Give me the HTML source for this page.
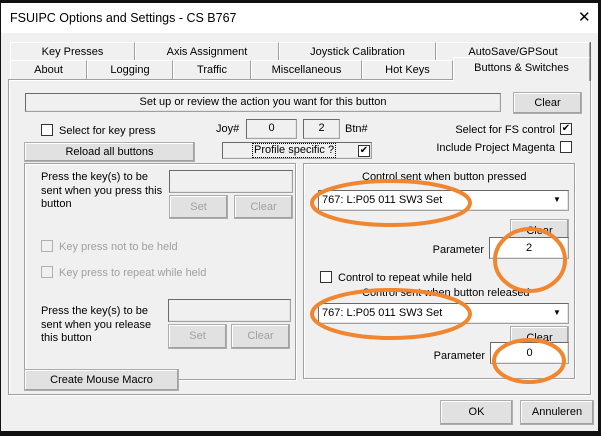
<!DOCTYPE html>
<html><head><meta charset="utf-8"><style>
*{box-sizing:border-box;margin:0;padding:0}
body{width:601px;height:436px;background:#111;position:relative;overflow:hidden;font-family:"Liberation Sans",sans-serif;font-size:11px;color:#000}
.a{position:absolute}
.win{left:1px;top:3px;width:597px;height:428px;background:#f0f0f0}
.tb{left:1px;top:3px;width:597px;height:30px;background:#fff}
.tab{position:absolute;height:19px;border:1px solid #fff;border-right-color:#a0a0a0;border-bottom:none;text-align:center;line-height:19px;background:#f0f0f0;box-shadow:1px 0 0 #696969}
.btn{position:absolute;background:#e1e1e1;border:1px solid #adadad;text-align:center;box-shadow:inset -1px -1px 0 #a0a0a0,inset 1px 1px 0 #fff}
.dis{color:#a0a0a0}
.ed{position:absolute;background:#fff;border:1px solid #a0a0a0;border-top-color:#696969;border-left-color:#696969;box-shadow:inset -1px -1px 0 #e3e3e3}
.ed.g{background:#f0f0f0}
.cb{position:absolute;width:12px;height:12px;border:1px solid #333;background:#fff}
.cb.d{border-color:#b0b0b0;background:#f0f0f0}
.grp{position:absolute;border:1px solid #a0a0a0;box-shadow:1px 1px 0 #fff,inset 1px 1px 0 #fff}
.t{position:absolute;white-space:nowrap}
.r{text-align:right}
</style></head><body>
<div class="a win"></div>
<div class="a tb"></div>
<div class="t" style="left:10px;top:11px;font-size:12.5px">FSUIPC Options and Settings - CS B767</div>
<div class="t" style="left:578px;top:8px;font-size:15px">✕</div>

<div class="tab" style="left:10px;top:42px;width:125px">Key Presses</div>
<div class="tab" style="left:135px;top:42px;width:144px">Axis Assignment</div>
<div class="tab" style="left:279px;top:42px;width:157px">Joystick Calibration</div>
<div class="tab" style="left:436px;top:42px;width:154px">AutoSave/GPSout</div>

<div class="grp" style="left:8px;top:79px;width:583px;height:316px"></div>
<div class="tab" style="left:10px;top:60px;width:77px">About</div>
<div class="tab" style="left:87px;top:60px;width:86px">Logging</div>
<div class="tab" style="left:173px;top:60px;width:78px">Traffic</div>
<div class="tab" style="left:251px;top:60px;width:111px">Miscellaneous</div>
<div class="tab" style="left:362px;top:60px;width:91px">Hot Keys</div>
<div class="tab" style="left:453px;top:57px;width:137px;height:24px;line-height:20px;border-bottom:none;z-index:2">Buttons &amp; Switches</div>

<div class="ed g" style="left:25px;top:93px;width:476px;height:19px;text-align:center;line-height:16px">Set up or review the action you want for this button</div>
<div class="btn" style="left:513px;top:92px;width:69px;height:22px;line-height:20px">Clear</div>

<div class="cb" style="left:41px;top:124px"></div>
<div class="t" style="left:59px;top:125px">Select for key press</div>
<div class="t" style="left:216px;top:123px">Joy#</div>
<div class="ed g" style="left:246px;top:119px;width:51px;height:20px;text-align:center;line-height:17px">0</div>
<div class="ed g" style="left:303px;top:119px;width:37px;height:20px;text-align:center;line-height:17px">2</div>
<div class="t" style="left:345px;top:123px">Btn#</div>
<div class="t r" style="left:400px;width:155px;top:124px">Select for FS control</div>
<div class="cb" style="left:560px;top:123px;font-size:10px;line-height:10px;text-align:center">✔</div>
<div class="t r" style="left:400px;width:155px;top:142px">Include Project Magenta</div>
<div class="cb" style="left:560px;top:141px"></div>

<div class="btn" style="left:24px;top:142px;width:171px;height:20px;line-height:18px">Reload all buttons</div>
<div class="ed g" style="left:222px;top:142px;width:150px;height:17px"></div>
<div class="t" style="left:252px;top:143px;border:1px dotted #000;padding:0 1px;line-height:13px">Profile specific ?</div>
<div class="cb" style="left:358px;top:145px;font-size:10px;line-height:10px;text-align:center">✔</div>

<div class="grp" style="left:24px;top:163px;width:272px;height:217px"></div>
<div class="grp" style="left:303px;top:163px;width:272px;height:216px"></div>

<div class="t" style="left:41px;top:171px;line-height:13.5px">Press the key(s) to be<br>sent when you press this<br>button</div>
<div class="ed g" style="left:169px;top:170px;width:124px;height:23px"></div>
<div class="btn dis" style="left:169px;top:195px;width:59px;height:24px;line-height:22px">Set</div>
<div class="btn dis" style="left:234px;top:195px;width:59px;height:24px;line-height:22px">Clear</div>
<div class="cb d" style="left:41px;top:240px"></div>
<div class="t dis" style="left:59px;top:241px">Key press not to be held</div>
<div class="cb d" style="left:41px;top:266px"></div>
<div class="t dis" style="left:59px;top:267px">Key press to repeat while held</div>
<div class="t" style="left:41px;top:305px;line-height:13.5px">Press the key(s) to be<br>sent when you release<br>this button</div>
<div class="ed g" style="left:168px;top:299px;width:123px;height:23px"></div>
<div class="btn dis" style="left:168px;top:324px;width:59px;height:25px;line-height:23px">Set</div>
<div class="btn dis" style="left:231px;top:324px;width:59px;height:25px;line-height:23px">Clear</div>
<div class="btn" style="left:24px;top:369px;width:155px;height:22px;line-height:20px">Create Mouse Macro</div>

<div class="t" style="left:362px;top:171px">Control sent when button pressed</div>
<div class="ed" style="left:318px;top:190px;width:251px;height:21px;line-height:18px;padding-left:3px">767: L:P05 011 SW3 Set</div>
<div class="t" style="left:553px;top:195px;font-size:8px">▼</div>
<div class="btn" style="left:510px;top:219px;width:59px;height:24px;line-height:22px">Clear</div>
<div class="t r" style="left:400px;width:84px;top:244px">Parameter</div>
<div class="ed" style="left:489px;top:237px;width:80px;height:22px;text-align:center;line-height:21px">2</div>
<div class="cb" style="left:320px;top:271px"></div>
<div class="t" style="left:338px;top:272px">Control to repeat while held</div>
<div class="t" style="left:362px;top:287px">Control sent when button released</div>
<div class="ed" style="left:318px;top:303px;width:251px;height:21px;line-height:18px;padding-left:3px">767: L:P05 011 SW3 Set</div>
<div class="t" style="left:553px;top:308px;font-size:8px">▼</div>
<div class="btn" style="left:510px;top:326px;width:59px;height:25px;line-height:23px">Clear</div>
<div class="t r" style="left:400px;width:85px;top:350px">Parameter</div>
<div class="ed" style="left:490px;top:342px;width:79px;height:22px;text-align:center;line-height:21px">0</div>

<svg class="a" style="left:0;top:0" width="601" height="436">
<g fill="none" stroke="#f08630" stroke-width="4">
<ellipse cx="391" cy="203" rx="79" ry="22"/>
<ellipse cx="530" cy="260" rx="35" ry="31"/>
<ellipse cx="391" cy="314" rx="79" ry="24"/>
<ellipse cx="529" cy="361" rx="35" ry="21"/>
</g></svg>

<div class="btn" style="left:440px;top:400px;width:73px;height:25px;line-height:23px">OK</div>
<div class="btn" style="left:520px;top:400px;width:74px;height:25px;line-height:23px">Annuleren</div>
</body></html>
